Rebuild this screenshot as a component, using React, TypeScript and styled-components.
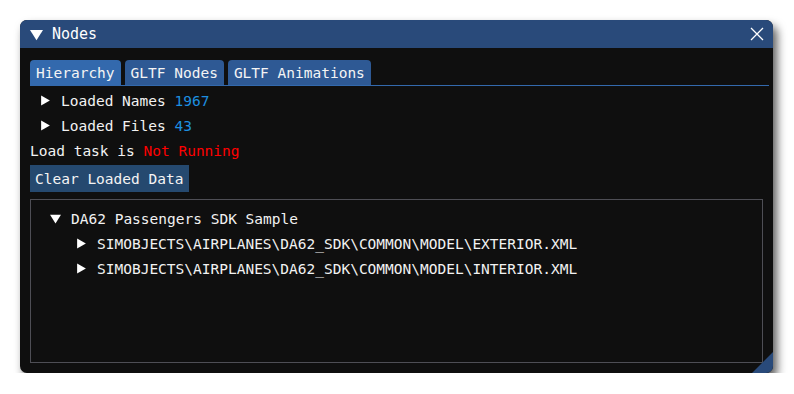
import React from 'react'
import styled, {createGlobalStyle} from 'styled-components'

const Global = createGlobalStyle`
    html, body {
        margin: 0;
        background: #fff;
    }
    body {
        font-family: 'DejaVu Sans Mono', 'Liberation Mono', monospace;
        font-size: 14.5px;
        color: #f2f2f2;
    }
`

type Arrow = 'down' | 'right'

const Tri = ({dir, size}: {dir: Arrow, size: number}) => (
    <svg width={size} height={size} viewBox="0 0 10 10">
        {dir === 'down'
            ? <polygon points="0,1.5 10,1.5 5,9.5" fill="#fff"/>
            : <polygon points="1,0.5 9,5 1,9.5" fill="#fff"/>}
    </svg>
)

const tabs = ['Hierarchy', 'GLTF Nodes', 'GLTF Animations']

const files = [
    'SIMOBJECTS\\AIRPLANES\\DA62_SDK\\COMMON\\MODEL\\EXTERIOR.XML',
    'SIMOBJECTS\\AIRPLANES\\DA62_SDK\\COMMON\\MODEL\\INTERIOR.XML',
]

const App = () => {
    return (
        <>
            <Global/>
            <Window>
                <TitleBar>
                    <TitleLeft>
                        <Tri dir="down" size={13}/>
                        <span>Nodes</span>
                    </TitleLeft>
                    <Close width="14" height="14" viewBox="0 0 14 14">
                        <path d="M1 1 L13 13 M13 1 L1 13" stroke="#fff" strokeWidth="1.3"/>
                    </Close>
                </TitleBar>

                <Body>
                    <TabBar>
                        {tabs.map((t, i) => (
                            <Tab key={t} active={i === 0}>{t}</Tab>
                        ))}
                    </TabBar>

                    <Row indent={10}>
                        <Tri dir="right" size={11}/>
                        <span>Loaded Names <Num>1967</Num></span>
                    </Row>
                    <Row indent={10}>
                        <Tri dir="right" size={11}/>
                        <span>Loaded Files <Num>43</Num></span>
                    </Row>
                    <Line>Load task is <Bad>Not Running</Bad></Line>

                    <Button>Clear Loaded Data</Button>

                    <Child>
                        <Row indent={19}>
                            <Tri dir="down" size={11}/>
                            <span>DA62 Passengers SDK Sample</span>
                        </Row>
                        {files.map(f => (
                            <Row key={f} indent={45}>
                                <Tri dir="right" size={11}/>
                                <span>{f}</span>
                            </Row>
                        ))}
                    </Child>
                </Body>

                <Grip width="21" height="21" viewBox="0 0 21 21">
                    <polygon points="21,0 21,21 0,21" fill="#294a7a"/>
                </Grip>
            </Window>
        </>
    )
}

export default App

const Window = styled.div`
    position: relative;
    margin: 20px 0 0 20px;
    width: 753px;
    height: 353px;
    background: #0f0f0f;
    border-radius: 7px;
    overflow: hidden;
    box-shadow: 4px 6px 10px rgba(0, 0, 0, 0.65);
    display: flex;
    flex-direction: column;
`

const TitleBar = styled.div`
    height: 28px;
    flex-shrink: 0;
    background: #294a7a;
    display: flex;
    align-items: center;
    justify-content: space-between;
    padding: 0 9px 0 10px;
    font-size: 15px;
    color: #fff;
`

const TitleLeft = styled.div`
    display: flex;
    align-items: center;
    gap: 9px;
`

const Close = styled.svg`
    display: block;
`

const Body = styled.div`
    flex: 1;
    display: flex;
    flex-direction: column;
    padding: 12px 10px 10px 10px;
    min-height: 0;
`

const TabBar = styled.div`
    display: flex;
    gap: 4px;
    height: 25px;
    border-bottom: 1.5px solid #3369ad;
    margin-right: -6px;
    margin-bottom: 2px;
    flex-shrink: 0;
`

const Tab = styled.div<{active: boolean}>`
    height: 25px;
    padding: 0 6px;
    display: flex;
    align-items: center;
    background: ${props => props.active ? '#3369ad' : '#2e5994'};
    border-radius: 4px 4px 0 0;
    color: #f4f4f4;
`

const Row = styled.div<{indent: number}>`
    height: 25px;
    display: flex;
    align-items: center;
    gap: 10px;
    padding-left: ${props => props.indent}px;
    white-space: pre;
`

const Line = styled.div`
    height: 25px;
    display: flex;
    align-items: center;
    white-space: pre;
`

const Num = styled.span`
    color: #1d8fe0;
`

const Bad = styled.span`
    color: #ff0000;
`

const Button = styled.div`
    align-self: flex-start;
    margin-top: 2px;
    height: 27px;
    padding: 0 6px 0 5px;
    display: flex;
    align-items: center;
    background: #25496f;
    color: #f4f4f4;
`

const Child = styled.div`
    margin-top: 7px;
    flex: 1;
    border: 1px solid #4e4e55;
    padding-top: 6px;
`

const Grip = styled.svg`
    position: absolute;
    right: 0;
    bottom: 0;
`
